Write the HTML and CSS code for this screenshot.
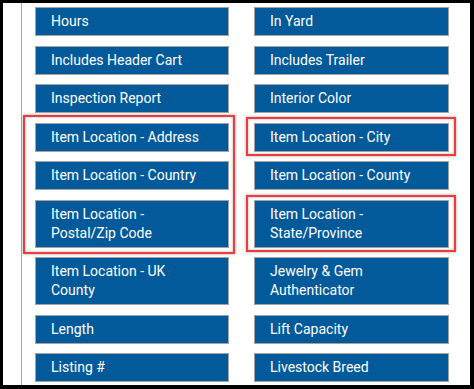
FILE: index.html
```html
<!DOCTYPE html>
<html>
<head>
<meta charset="utf-8">
<link rel="stylesheet" href="styles.css">
</head>
<body>
<div class="frame">
  <div class="rail"></div>
  <div class="grid">
    <div class="btn">Hours</div>
    <div class="btn">In Yard</div>
    <div class="btn">Includes Header Cart</div>
    <div class="btn">Includes Trailer</div>
    <div class="btn">Inspection Report</div>
    <div class="btn">Interior Color</div>
    <div class="btn">Item Location - Address</div>
    <div class="btn">Item Location - City</div>
    <div class="btn">Item Location - Country</div>
    <div class="btn">Item Location - County</div>
    <div class="btn">Item Location -<br>Postal/Zip Code</div>
    <div class="btn">Item Location -<br>State/Province</div>
    <div class="btn">Item Location - UK<br>County</div>
    <div class="btn">Jewelry &amp; Gem<br>Authenticator</div>
    <div class="btn">Length</div>
    <div class="btn">Lift Capacity</div>
    <div class="btn">Listing #</div>
    <div class="btn">Livestock Breed</div>
  </div>
  <div class="mark mark-left"></div>
  <div class="mark mark-city"></div>
  <div class="mark mark-state"></div>
</div>
</body>
</html>
```
FILE: styles.css
```css
html, body {
  margin: 0;
  padding: 0;
  background: #fff;
}
.frame {
  position: relative;
  width: 474px;
  height: 389px;
  box-sizing: border-box;
  border-style: solid;
  border-color: #000;
  border-width: 3px 4px 4px 3px;
  background: #fff;
  display: flex;
  overflow: hidden;
  font-family: Roboto, "Liberation Sans", sans-serif;
}
.rail {
  width: 18px;
  flex: none;
  border-right: 1px solid #a9a9a9;
}
.grid {
  margin-left: 13px;
  padding-top: 4px;
  display: grid;
  grid-template-columns: 194px 195px;
  column-gap: 25px;
  row-gap: 9.5px;
  align-content: start;
}
.btn {
  background: #035a9a;
  border: 1px solid #a3a3a3;
  color: #fff;
  font-size: 14px;
  line-height: 19px;
  padding: 4px 8px 4px 15px;
  white-space: nowrap;
}
.mark {
  position: absolute;
  box-sizing: border-box;
  border: 2px solid #ee3c3e;
  box-shadow: 0 0 3px rgba(0,0,0,0.35), inset 0 0 3px rgba(0,0,0,0.3);
}
.mark-left {
  left: 20px;
  top: 112px;
  width: 212px;
  height: 139px;
}
.mark-city {
  left: 243px;
  top: 114px;
  width: 210px;
  height: 39px;
}
.mark-state {
  left: 243px;
  top: 192px;
  width: 210px;
  height: 57px;
}
```
